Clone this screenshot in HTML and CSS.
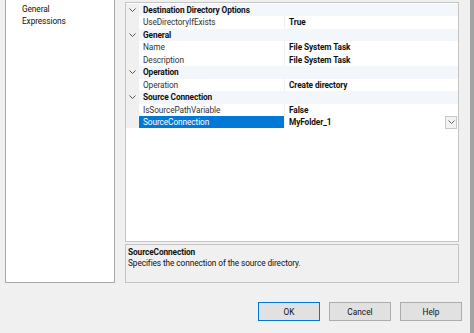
FILE: index.html
```html
<!DOCTYPE html>
<html lang="en">
<head>
    <meta charset="UTF-8">
    <title>File System Task Editor</title>
    <link rel="stylesheet" href="styles.css">
</head>
<body>
    <div class="dialog">
        <div class="main">
            <div class="nav">
                <div class="nav-item">General</div>
                <div class="nav-item">Expressions</div>
            </div>
            <div class="side">
                <div class="grid">
                    <div class="row cat"><span class="gutter"><svg width="7" height="5" viewBox="0 0 7 5"><path d="M0.5 0.5 L3.5 3.5 L6.5 0.5" fill="none" stroke="#555" stroke-width="1"/></svg></span><span class="cat-name">Destination Directory Options</span></div>
                    <div class="row"><span class="gutter"></span><span class="name">UseDirectoryIfExists</span><span class="value">True</span></div>
                    <div class="row cat"><span class="gutter"><svg width="7" height="5" viewBox="0 0 7 5"><path d="M0.5 0.5 L3.5 3.5 L6.5 0.5" fill="none" stroke="#555" stroke-width="1"/></svg></span><span class="cat-name">General</span></div>
                    <div class="row"><span class="gutter"></span><span class="name">Name</span><span class="value">File System Task</span></div>
                    <div class="row"><span class="gutter"></span><span class="name">Description</span><span class="value">File System Task</span></div>
                    <div class="row cat"><span class="gutter"><svg width="7" height="5" viewBox="0 0 7 5"><path d="M0.5 0.5 L3.5 3.5 L6.5 0.5" fill="none" stroke="#555" stroke-width="1"/></svg></span><span class="cat-name">Operation</span></div>
                    <div class="row"><span class="gutter"></span><span class="name">Operation</span><span class="value">Create directory</span></div>
                    <div class="row cat"><span class="gutter"><svg width="7" height="5" viewBox="0 0 7 5"><path d="M0.5 0.5 L3.5 3.5 L6.5 0.5" fill="none" stroke="#555" stroke-width="1"/></svg></span><span class="cat-name">Source Connection</span></div>
                    <div class="row"><span class="gutter"></span><span class="name">IsSourcePathVariable</span><span class="value">False</span></div>
                    <div class="row selected"><span class="gutter"></span><span class="name">SourceConnection</span><span class="value">MyFolder_1<span class="drop"><svg width="7" height="4" viewBox="0 0 7 4"><path d="M0.5 0.5 L3.5 3.5 L6.5 0.5" fill="none" stroke="#666" stroke-width="1"/></svg></span></span></div>
                </div>
                <div class="desc">
                    <div class="desc-title">SourceConnection</div>
                    <div class="desc-text">Specifies the connection of the source directory.</div>
                </div>
            </div>
        </div>
        <div class="buttons">
            <button class="btn default">OK</button>
            <button class="btn">Cancel</button>
            <button class="btn">Help</button>
        </div>
    </div>
</body>
</html>
```

FILE: styles.css
```css
html, body {
    margin: 0;
    padding: 0;
}

body {
    width: 474px;
    height: 333px;
    overflow: hidden;
    background: #f0f0f0;
    font-family: Roboto, "Noto Sans", sans-serif;
    font-size: 8.3px;
    letter-spacing: -0.1px;
    color: #111;
}

.dialog {
    height: 333px;
    display: flex;
    flex-direction: column;
    border-right: 4px solid #a3a3a3;
    box-sizing: border-box;
}

.main {
    display: flex;
    padding-left: 5px;
}

.nav {
    width: 110px;
    height: 284px;
    margin-top: -1px;
    background: #fff;
    border: 1px solid #a8a8a8;
    box-sizing: border-box;
    padding-top: 3px;
}

.nav-item {
    height: 12.4px;
    line-height: 12.4px;
    padding-left: 16px;
}

.side {
    margin-left: 10px;
    width: 334px;
    display: flex;
    flex-direction: column;
    padding-top: 2px;
}

.grid {
    height: 240px;
    background: #fff;
    border: 1px solid #c4c4c4;
    box-sizing: border-box;
    padding-top: 1px;
}

.row {
    display: flex;
    height: 12.44px;
    line-height: 12.44px;
}

.gutter {
    width: 13px;
    flex: none;
    background: #f0f0f0;
    display: flex;
    align-items: center;
    justify-content: center;
}

.cat {
    background: #f3f6fa;
}

.cat-name {
    font-weight: bold;
    padding-left: 4px;
}

.name {
    width: 145px;
    flex: none;
    padding-left: 4px;
    box-sizing: border-box;
    color: #333;
}

.value {
    flex: 1;
    font-weight: bold;
    padding-left: 4px;
    border-left: 1px solid #f0f0f0;
    display: flex;
}

.selected .name {
    background: #0078d7;
    color: #fff;
}

.drop {
    margin-left: auto;
    margin-right: 1px;
    width: 10px;
    height: 11px;
    border: 1px solid #c8c8c8;
    background: #f2f2f2;
    display: flex;
    align-items: center;
    justify-content: center;
}

.desc {
    margin-top: 2px;
    height: 39px;
    border: 1px solid #c4c4c4;
    box-sizing: border-box;
    padding: 2px 2px;
    line-height: 11px;
}

.desc-title {
    font-weight: bold;
}

.buttons {
    display: flex;
    justify-content: flex-end;
    gap: 9px;
    padding: 19px 8px 0 0;
}

.btn {
    width: 62px;
    height: 19px;
    margin: 0;
    padding: 0;
    font-family: inherit;
    font-size: 8.3px;
    color: #111;
    background: #e1e1e1;
    border: 1px solid #adadad;
}

.btn.default {
    border-color: #0078d7;
}
```
